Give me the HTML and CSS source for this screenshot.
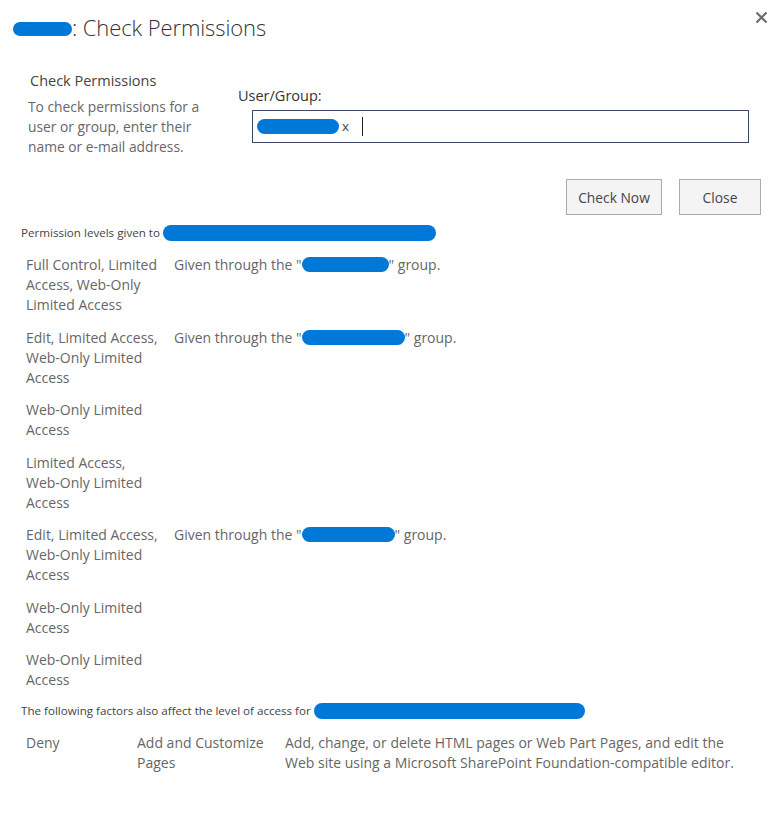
FILE: index.html
```html
<!DOCTYPE html>
<html lang="en">
<head>
<meta charset="utf-8">
<title>Check Permissions</title>
<link rel="stylesheet" href="styles.css">
</head>
<body>
<div class="dialog">
  <div class="dialog-header">
    <h1 class="dialog-title"><span class="redact redact-title"></span>: Check Permissions</h1>
    <button class="dialog-close" aria-label="Close">
      <svg width="13" height="13" viewBox="0 0 13 13"><path d="M1.5 1.5 L11.5 11.5 M11.5 1.5 L1.5 11.5" stroke="#6b6b6b" stroke-width="2.2" fill="none"/></svg>
    </button>
  </div>

  <div class="form-section">
    <div class="form-desc">
      <div class="form-desc-title">Check Permissions</div>
      <div class="form-desc-text">To check permissions for a<br>user or group, enter their<br>name or e-mail address.</div>
    </div>
    <div class="form-field">
      <label class="field-label">User/Group:</label>
      <div class="people-picker">
        <span class="redact redact-user"></span><span class="pp-remove">x</span><span class="pp-caret"></span>
      </div>
    </div>
  </div>

  <div class="actions">
    <button class="btn btn-check">Check Now</button>
    <button class="btn btn-close">Close</button>
  </div>

  <div class="results-heading">Permission levels given to <span class="redact redact-head1"></span></div>

  <div class="perm-list">
    <div class="perm-row">
      <div class="perm-level">Full Control, Limited<br>Access, Web-Only<br>Limited Access</div>
      <div class="perm-source">Given through the "<span class="redact redact-g1"></span>" group.</div>
    </div>
    <div class="perm-row">
      <div class="perm-level">Edit, Limited Access,<br>Web-Only Limited<br>Access</div>
      <div class="perm-source">Given through the "<span class="redact redact-g2"></span>" group.</div>
    </div>
    <div class="perm-row">
      <div class="perm-level">Web-Only Limited<br>Access</div>
      <div class="perm-source"></div>
    </div>
    <div class="perm-row">
      <div class="perm-level">Limited Access,<br>Web-Only Limited<br>Access</div>
      <div class="perm-source"></div>
    </div>
    <div class="perm-row">
      <div class="perm-level">Edit, Limited Access,<br>Web-Only Limited<br>Access</div>
      <div class="perm-source">Given through the "<span class="redact redact-g3"></span>" group.</div>
    </div>
    <div class="perm-row">
      <div class="perm-level">Web-Only Limited<br>Access</div>
      <div class="perm-source"></div>
    </div>
    <div class="perm-row">
      <div class="perm-level">Web-Only Limited<br>Access</div>
      <div class="perm-source"></div>
    </div>
  </div>

  <div class="results-heading results-heading-2">The following factors also affect the level of access for <span class="redact redact-head2"></span></div>

  <div class="factor-row">
    <div class="factor-type">Deny</div>
    <div class="factor-perm">Add and Customize<br>Pages</div>
    <div class="factor-desc">Add, change, or delete HTML pages or Web Part Pages, and edit the<br>Web site using a Microsoft SharePoint Foundation-compatible editor.</div>
  </div>
</div>
</body>
</html>
```

FILE: styles.css
```css
html, body {
  margin: 0;
  padding: 0;
  background: #ffffff;
}

body {
  font-family: "Open Sans", "Noto Sans", "Liberation Sans", sans-serif;
  color: #444444;
}

.dialog {
  width: 783px;
  box-sizing: border-box;
}

.redact {
  display: inline-block;
  background: #0078d7;
  border-radius: 8px;
  vertical-align: middle;
}

.dialog-header {
  display: flex;
  justify-content: space-between;
  align-items: flex-start;
  padding: 12px 14px 0 13px;
  height: 38px;
}

.dialog-title {
  margin: 0;
  font-size: 22px;
  font-weight: 300;
  color: #333333;
  line-height: 30px;
  letter-spacing: -0.1px;
}

.redact-title {
  width: 59px;
  height: 14px;
  border-radius: 7px;
  margin-top: -3px;
}

.dialog-close {
  border: none;
  background: transparent;
  padding: 0;
  margin-top: -2px;
  width: 15px;
  height: 15px;
  display: flex;
  align-items: center;
  justify-content: center;
  cursor: pointer;
}

.form-section {
  display: flex;
  padding: 19px 0 0 28px;
}

.form-desc {
  width: 210px;
}

.form-desc-title {
  font-size: 14.5px;
  color: #444444;
  line-height: 20px;
  margin-left: 2px;
  margin-top: 2px;
}

.form-desc-text {
  font-size: 13.8px;
  color: #666666;
  line-height: 20px;
  margin-top: 6px;
}

.form-field {
  padding-top: 17px;
}

.field-label {
  display: block;
  font-size: 14.5px;
  color: #333333;
  line-height: 20px;
}

.people-picker {
  margin: 4px 0 0 14px;
  width: 497px;
  height: 33px;
  box-sizing: border-box;
  border: 1px solid #3d4963;
  display: flex;
  align-items: center;
  padding-left: 4px;
}

.redact-user {
  width: 82px;
  height: 15px;
}

.pp-remove {
  font-size: 13.5px;
  color: #444444;
  margin-left: 3px;
  line-height: 15px;
}

.pp-caret {
  width: 1px;
  height: 19px;
  background: #222222;
  margin-left: 13px;
}

.actions {
  display: flex;
  justify-content: flex-end;
  gap: 17px;
  padding: 22px 22px 0 0;
}

.btn {
  font-family: inherit;
  font-size: 13.8px;
  color: #444444;
  background: #f4f4f4;
  border: 1px solid #ababab;
  height: 36px;
  padding: 0;
  cursor: pointer;
}

.btn-check { width: 96px; }
.btn-close { width: 82px; }

.results-heading {
  font-size: 11.6px;
  color: #444444;
  padding: 10px 0 0 21px;
  line-height: 16px;
}

.redact-head1 {
  width: 273px;
  height: 16px;
  margin-top: -2px;
}

.redact-head2 {
  width: 271px;
  height: 16px;
  margin-top: -2px;
}

.perm-list {
  display: flex;
  flex-direction: column;
  gap: 12.5px;
  padding: 14px 0 0 26px;
}

.perm-row {
  display: flex;
  font-size: 14px;
  line-height: 20px;
  color: #666666;
}

.perm-level {
  width: 148px;
  flex: none;
}

.perm-source {
  flex: 1;
}

.redact-g1 { width: 87px; height: 15px; margin-top: -3px; }
.redact-g2 { width: 103px; height: 15px; margin-top: -3px; }
.redact-g3 { width: 93px; height: 15px; margin-top: -3px; }

.results-heading-2 {
  padding-top: 13px;
}

.factor-row {
  display: flex;
  font-size: 14px;
  line-height: 20px;
  color: #666666;
  padding: 14px 0 0 26px;
}

.factor-type { width: 111px; flex: none; }
.factor-perm { width: 148px; flex: none; }
.factor-desc { flex: 1; }
```
